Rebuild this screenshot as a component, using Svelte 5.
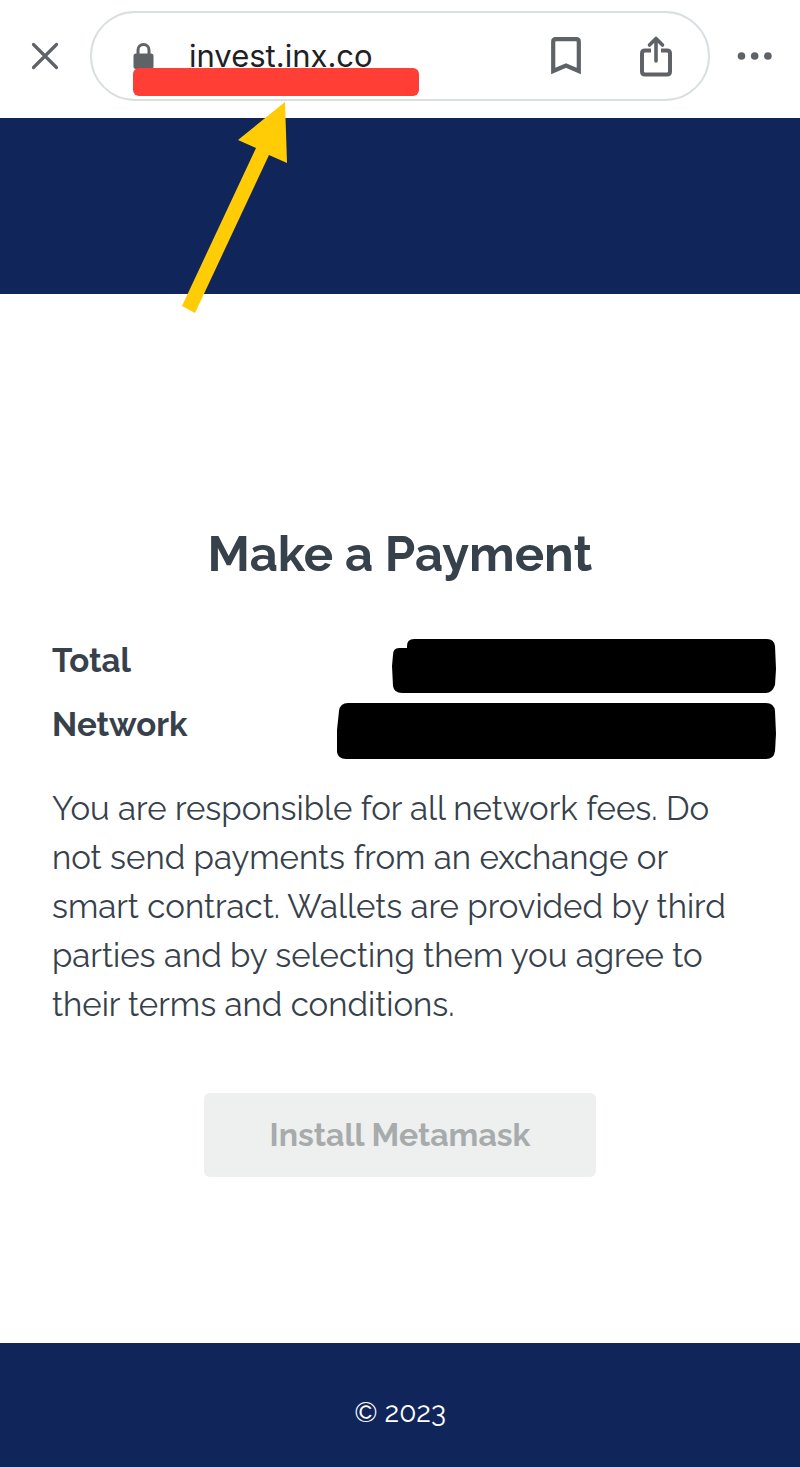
<script>
    let address = $state('invest.inx.co');

    const year = 2023;
</script>

<div class="page">
    <header class="browser-bar">
        <button class="icon-button close" aria-label="Close">
            <svg width="28" height="28" viewBox="0 0 28 28">
                <path d="M2.5 2.5 25.5 25.5M25.5 2.5 2.5 25.5" fill="none" stroke="currentColor" stroke-width="3.2" stroke-linecap="round" />
            </svg>
        </button>

        <div class="address">
            <svg class="lock" width="21" height="26" viewBox="0 0 21 26">
                <path d="M5 12V7a5.5 5.5 0 0 1 11 0v5" fill="none" stroke="currentColor" stroke-width="3" />
                <rect x="0.5" y="10.5" width="20" height="15.5" rx="2.5" fill="currentColor" />
            </svg>
            <input type="text" aria-label="Address" bind:value={address} />
            <button class="icon-button bookmark" aria-label="Bookmark">
                <svg width="30" height="38" viewBox="0 0 30 38">
                    <path d="M2.2 34V4.700Q2.200 2.200 4.700 2.200H25.300Q27.800 2.200 27.800 4.700V34L15 28.500Z" fill="none" stroke="currentColor" stroke-width="4.200" />
                </svg>
            </button>
            <button class="icon-button" aria-label="Share">
                <svg width="34" height="42" viewBox="0 0 34 42">
                    <path d="M12 15.500H6q-3 0-3 3V36.500q0 3 3 3H28q3 0 3-3V18.500q0-3-3-3H22" fill="none" stroke="currentColor" stroke-width="4" />
                    <path d="M17 26V4M10.500 10 17 3.500l6.500 6.500" fill="none" stroke="currentColor" stroke-width="3.600" stroke-linecap="round" stroke-linejoin="round" />
                </svg>
            </button>
            <span class="underline"></span>
        </div>

        <button class="icon-button more" aria-label="More options">
            <svg width="36" height="8" viewBox="0 0 36 8">
                <circle cx="4.500" cy="4" r="3.800" fill="currentColor" />
                <circle cx="17.700" cy="4" r="3.800" fill="currentColor" />
                <circle cx="30.900" cy="4" r="3.800" fill="currentColor" />
            </svg>
        </button>

        <svg class="arrow" width="106" height="213" viewBox="0 0 106 213">
            <path d="M104 1 57 39 75 47 1 205 14 212 88 54 106 62Z" fill="#ffcc05" />
        </svg>
    </header>

    <div class="banner"></div>

    <main>
        <h1>Make a Payment</h1>

        <dl>
            <div class="row">
                <dt>Total</dt>
                <dd>
                    <svg width="386" height="56" viewBox="0 0 386 56" role="img" aria-label="Hidden total">
                        <path d="M17 8Q17 1 24 1H377Q384 1 385 8L386 31 385 47Q382 55 376 55H12Q4 55 3 48L2 28 3 17Q3 10 9 10H17Z" />
                    </svg>
                </dd>
            </div>
            <div class="row">
                <dt>Network</dt>
                <dd>
                    <svg width="441" height="58" viewBox="0 0 441 58" role="img" aria-label="Hidden network">
                        <path d="M4 9Q5 1 13 1H431Q439 1 440 9L441 32 440 49Q439 57 431 57H11Q3 57 2 50L2 28Z" />
                    </svg>
                </dd>
            </div>
        </dl>

        <p class="notice">
            You are responsible for all network fees. Do not send payments from an
            exchange or smart contract. Wallets are provided by third parties and by
            selecting them you agree to their terms and conditions.
        </p>

        <button class="install" disabled>Install Metamask</button>
    </main>

    <footer>© {year}</footer>
</div>

<style>
    :global(body) {
        margin: 0;
        background: #ffffff;
    }

    .page {
        display: flex;
        flex-direction: column;
        min-height: 100vh;
        font-family: Raleway, Lato, sans-serif;
        color: #36414b;
    }

    .browser-bar {
        position: relative;
        display: flex;
        align-items: center;
        box-sizing: border-box;
        height: 118px;
        padding: 0 0 6px;
        color: #5f6368;
    }

    .icon-button {
        display: flex;
        align-items: center;
        justify-content: center;
        padding: 0;
        border: none;
        background: none;
        color: inherit;
        cursor: pointer;
    }

    .close,
    .more {
        flex: 0 0 90px;
        height: 90px;
    }

    .address {
        position: relative;
        display: flex;
        flex: 1;
        align-items: center;
        min-width: 0;
        box-sizing: border-box;
        height: 90px;
        padding: 0 35px 0 41px;
        border: 2px solid #dadfe1;
        border-radius: 45px;
    }

    .lock {
        flex: none;
    }

    input {
        flex: 1;
        min-width: 0;
        margin: 0 16px 0 35px;
        padding: 0;
        border: none;
        outline: none;
        background: none;
        font-family: Inter, sans-serif;
        font-size: 31px;
        line-height: 40px;
        color: #202124;
    }

    .bookmark {
        margin-right: 58px;
    }

    .underline {
        position: absolute;
        top: 55px;
        left: 41px;
        width: 286px;
        height: 28px;
        border-radius: 6px;
        background: #ff3f35;
    }

    .arrow {
        position: absolute;
        top: 101px;
        left: 181px;
    }

    .banner {
        height: 176px;
        background: #10265b;
    }

    main {
        display: flex;
        flex: 1;
        flex-direction: column;
        padding: 224px 52px 166px;
    }

    h1 {
        margin: 0 0 48px;
        font-size: 49px;
        font-weight: 700;
        line-height: 72px;
        text-align: center;
    }

    dl {
        display: flex;
        flex-direction: column;
        gap: 8px;
        margin: 0 -28px 0 0;
    }

    .row {
        display: flex;
        align-items: flex-start;
        justify-content: space-between;
    }

    dt {
        font-size: 33px;
        font-weight: 700;
        line-height: 46px;
    }

    dd {
        display: flex;
        margin: 0;
    }

    dd svg {
        fill: #000000;
    }

    .notice {
        max-width: 680px;
        margin: 24px 0 64px;
        font-size: 33px;
        line-height: 49px;
    }

    .install {
        align-self: center;
        padding: 18px 66px;
        border: none;
        border-radius: 6px;
        background: #eef0f0;
        font-family: inherit;
        font-size: 32px;
        font-weight: 700;
        line-height: 48px;
        color: #a8abab;
    }

    footer {
        padding: 56px 20px 40px;
        background: #10265b;
        font-size: 28px;
        line-height: 28px;
        text-align: center;
        color: #ffffff;
    }
</style>
